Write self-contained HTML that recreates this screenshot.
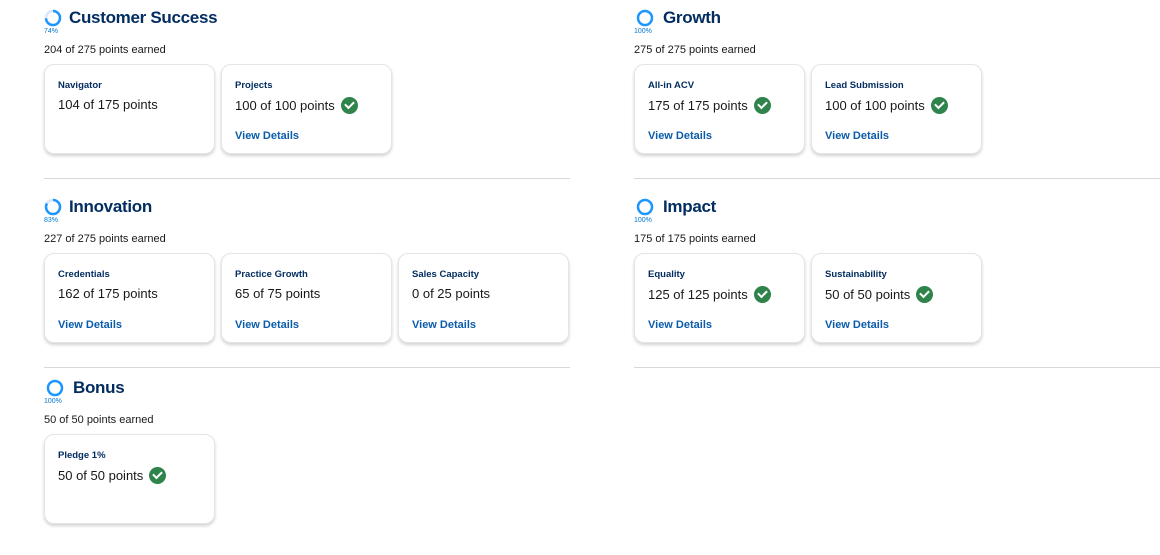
<!DOCTYPE html>
<html><head><style>
*{margin:0;padding:0;box-sizing:border-box}
body{width:1160px;height:555px;background:#fff;font-family:"Liberation Sans",sans-serif;position:relative;overflow:hidden;color:#181818}
.sec{position:absolute;width:526px}
.ring{position:absolute;left:0;top:9px;width:18px;height:18px}
.h{position:absolute;left:25px;top:8px;font-size:17px;font-weight:bold;color:#032d60;letter-spacing:-0.3px}
.h.w{left:29px}
.pct{position:absolute;left:0;top:28px;font-size:7px;color:#0176d3}
.earn{position:absolute;left:0;top:44px;font-size:11px;color:#181818}
.card{position:absolute;top:64px;width:171px;height:90px;border:1px solid #e5e5e5;border-radius:10px;box-shadow:0 2px 3px rgba(0,0,0,.18);background:#fff}
.ct{position:absolute;left:13px;top:15px;font-size:9.5px;font-weight:bold;color:#032d60}
.cp{position:absolute;left:13px;top:32px;font-size:13px;color:#181818;display:flex;align-items:center}
.ck{display:inline-block;width:17px;height:17px;border-radius:50%;background:#2e844a;margin-left:6px;position:relative}
.ck:after{content:"";position:absolute;left:4px;top:4px;width:7px;height:4px;border-left:2px solid #fff;border-bottom:2px solid #fff;transform:rotate(-45deg)}
.vd{position:absolute;left:13px;top:65px;font-size:11px;font-weight:bold;color:#0b5cab}
.div{position:absolute;height:1px;background:#d8d8d8;width:526px}
</style></head><body>

<div class="sec" style="left:44px;top:0">
<svg class="ring" viewBox="0 0 18 18"><circle cx="9" cy="9" r="7" fill="none" stroke="#d8e6fe" stroke-width="2.5"/><circle cx="9" cy="9" r="7" fill="none" stroke="#1b96ff" stroke-width="2.5" stroke-dasharray="32.5 44" transform="rotate(-90 9 9)"/></svg>
<div class="h">Customer Success</div><div class="pct">74%</div><div class="earn">204 of 275 points earned</div>
<div class="card" style="left:0"><div class="ct">Navigator</div><div class="cp">104 of 175 points</div></div>
<div class="card" style="left:177px"><div class="ct">Projects</div><div class="cp">100 of 100 points<span class="ck"></span></div><div class="vd">View Details</div></div>
</div>
<div class="div" style="left:44px;top:178px"></div>

<div class="sec" style="left:44px;top:189px">
<svg class="ring" viewBox="0 0 18 18"><circle cx="9" cy="9" r="7" fill="none" stroke="#d8e6fe" stroke-width="2.5"/><circle cx="9" cy="9" r="7" fill="none" stroke="#1b96ff" stroke-width="2.5" stroke-dasharray="36.5 44" transform="rotate(-90 9 9)"/></svg>
<div class="h">Innovation</div><div class="pct">83%</div><div class="earn">227 of 275 points earned</div>
<div class="card" style="left:0"><div class="ct">Credentials</div><div class="cp">162 of 175 points</div><div class="vd">View Details</div></div>
<div class="card" style="left:177px"><div class="ct">Practice Growth</div><div class="cp">65 of 75 points</div><div class="vd">View Details</div></div>
<div class="card" style="left:354px"><div class="ct">Sales Capacity</div><div class="cp">0 of 25 points</div><div class="vd">View Details</div></div>
</div>
<div class="div" style="left:44px;top:367px"></div>

<div class="sec" style="left:44px;top:370px">
<svg class="ring" viewBox="0 0 18 18" style="left:2px"><circle cx="9" cy="9" r="7" fill="none" stroke="#1b96ff" stroke-width="2.5"/></svg>
<div class="h w">Bonus</div><div class="pct">100%</div><div class="earn">50 of 50 points earned</div>
<div class="card" style="left:0"><div class="ct">Pledge 1%</div><div class="cp">50 of 50 points<span class="ck"></span></div></div>
</div>

<div class="sec" style="left:634px;top:0">
<svg class="ring" viewBox="0 0 18 18" style="left:2px"><circle cx="9" cy="9" r="7" fill="none" stroke="#1b96ff" stroke-width="2.5"/></svg>
<div class="h w">Growth</div><div class="pct">100%</div><div class="earn">275 of 275 points earned</div>
<div class="card" style="left:0"><div class="ct">All-in ACV</div><div class="cp">175 of 175 points<span class="ck"></span></div><div class="vd">View Details</div></div>
<div class="card" style="left:177px"><div class="ct">Lead Submission</div><div class="cp">100 of 100 points<span class="ck"></span></div><div class="vd">View Details</div></div>
</div>
<div class="div" style="left:634px;top:178px"></div>

<div class="sec" style="left:634px;top:189px">
<svg class="ring" viewBox="0 0 18 18" style="left:2px"><circle cx="9" cy="9" r="7" fill="none" stroke="#1b96ff" stroke-width="2.5"/></svg>
<div class="h w">Impact</div><div class="pct">100%</div><div class="earn">175 of 175 points earned</div>
<div class="card" style="left:0"><div class="ct">Equality</div><div class="cp">125 of 125 points<span class="ck"></span></div><div class="vd">View Details</div></div>
<div class="card" style="left:177px"><div class="ct">Sustainability</div><div class="cp">50 of 50 points<span class="ck"></span></div><div class="vd">View Details</div></div>
</div>
<div class="div" style="left:634px;top:367px"></div>
</body></html>
